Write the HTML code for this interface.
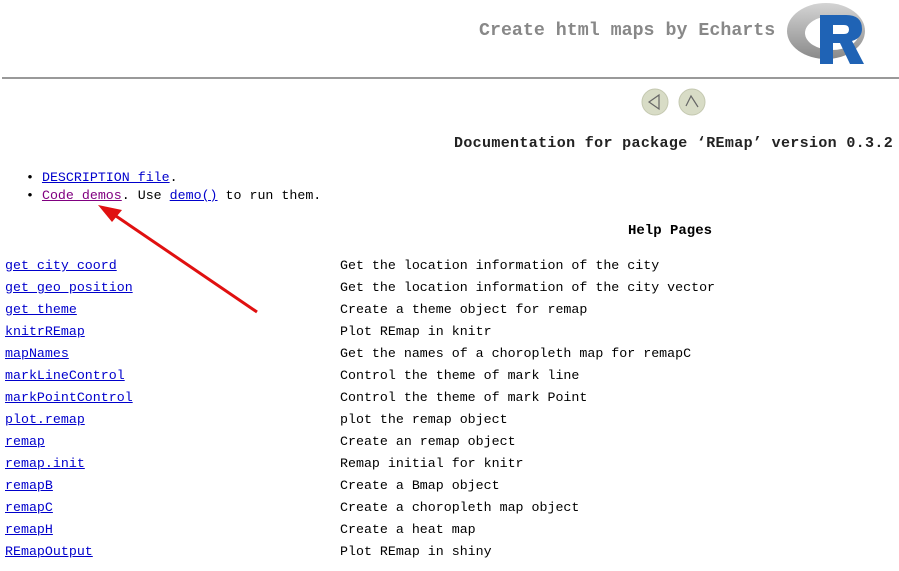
<!DOCTYPE html>
<html><head><meta charset="utf-8"><style>
body{margin:0;width:899px;height:571px;overflow:hidden;background:#fff;font-family:"Liberation Mono","Noto Sans CJK SC",monospace;font-size:13.3px;color:#000;position:relative}
.a{position:absolute;white-space:nowrap;line-height:16px}
a{color:#00c;text-decoration:underline}
a.v{color:#800080}
</style></head><body>
<div class="a" style="left:479px;top:20px;font-size:18.3px;line-height:22px;color:#888;font-weight:bold">Create html maps by Echarts</div>
<svg class="a" style="left:786px;top:2px" width="84" height="64" viewBox="0 0 84 64">
<defs><linearGradient id="g" x1="0" y1="0" x2="0" y2="1"><stop offset="0" stop-color="#d4d4d4"/><stop offset="1" stop-color="#8a8a8a"/></linearGradient></defs>
<ellipse cx="40" cy="29" rx="39" ry="28" fill="url(#g)"/>
<ellipse cx="46" cy="31" rx="27" ry="17" fill="#fff"/>
<path d="M34 13 H60 Q76 13 76 27 Q76 36 66 39 L78 62 H64 L54 41 H47 V62 H34 Z M47 23 V32 H58 Q63 32 63 27.5 Q63 23 58 23 Z" fill="#1f63b5"/>
</svg>
<div class="a" style="left:2px;top:77px;width:897px;height:0;border-top:2px solid #999"></div>
<svg class="a" style="left:640px;top:88px" width="68" height="30">
<circle cx="15" cy="14" r="13" fill="#d8dcc6" stroke="#c4c8b0"/><path d="M19 7 L9 14 L19 21 Z" fill="none" stroke="#666" stroke-width="1.2"/>
<circle cx="52" cy="14" r="13" fill="#d8dcc6" stroke="#c4c8b0"/><path d="M46 18 L51 8 L58 19" fill="none" stroke="#666" stroke-width="1.2"/>
</svg>
<div class="a" style="left:454px;top:136px;font-size:15px;font-weight:bold;color:#222;letter-spacing:0.34px">Documentation for package ‘REmap’ version 0.3.2</div>
<div class="a" style="left:26px;top:170px">• <a href="#">DESCRIPTION file</a>.</div>
<div class="a" style="left:26px;top:188px">• <a class="v" href="#">Code demos</a>. Use <a href="#">demo()</a> to run them.</div>
<div class="a" style="left:628px;top:223px;font-weight:bold;font-size:14px">Help Pages</div>
<svg class="a" style="left:90px;top:200px" width="180" height="120"><line x1="167" y1="112" x2="20" y2="12" stroke="#e01010" stroke-width="3"/><path d="M8 5 L32 10 L22 22 Z" fill="#e01010"/></svg>
<div class="a" style="left:5px;top:255px;line-height:22px">
<a href="#">get city coord</a><br><a href="#">get geo position</a><br><a href="#">get theme</a><br><a href="#">knitrREmap</a><br><a href="#">mapNames</a><br><a href="#">markLineControl</a><br><a href="#">markPointControl</a><br><a href="#">plot.remap</a><br><a href="#">remap</a><br><a href="#">remap.init</a><br><a href="#">remapB</a><br><a href="#">remapC</a><br><a href="#">remapH</a><br><a href="#">REmapOutput</a></div>
<div class="a" style="left:340px;top:255px;line-height:22px">
Get the location information of the city<br>Get the location information of the city vector<br>Create a theme object for remap<br>Plot REmap in knitr<br>Get the names of a choropleth map for remapC<br>Control the theme of mark line<br>Control the theme of mark Point<br>plot the remap object<br>Create an remap object<br>Remap initial for knitr<br>Create a Bmap object<br>Create a choropleth map object<br>Create a heat map<br>Plot REmap in shiny</div>
</body></html>
